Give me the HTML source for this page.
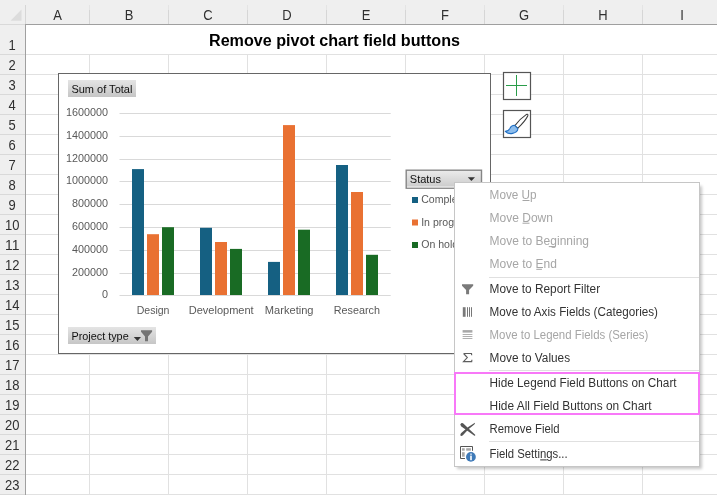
<!DOCTYPE html>
<html><head><meta charset="utf-8"><style>
html,body{margin:0;padding:0;width:717px;height:495px;overflow:hidden;background:#fff;font-family:"Liberation Sans",sans-serif;}
svg{display:block;will-change:transform;}
</style></head><body>
<svg width="717" height="495" viewBox="0 0 717 495"><rect x="0" y="0" width="717" height="495" fill="#ffffff"/>
<rect x="25" y="74" width="692" height="1" fill="#e1e1e1"/>
<rect x="25" y="94" width="692" height="1" fill="#e1e1e1"/>
<rect x="25" y="114" width="692" height="1" fill="#e1e1e1"/>
<rect x="25" y="134" width="692" height="1" fill="#e1e1e1"/>
<rect x="25" y="154" width="692" height="1" fill="#e1e1e1"/>
<rect x="25" y="174" width="692" height="1" fill="#e1e1e1"/>
<rect x="25" y="194" width="692" height="1" fill="#e1e1e1"/>
<rect x="25" y="214" width="692" height="1" fill="#e1e1e1"/>
<rect x="25" y="234" width="692" height="1" fill="#e1e1e1"/>
<rect x="25" y="254" width="692" height="1" fill="#e1e1e1"/>
<rect x="25" y="274" width="692" height="1" fill="#e1e1e1"/>
<rect x="25" y="294" width="692" height="1" fill="#e1e1e1"/>
<rect x="25" y="314" width="692" height="1" fill="#e1e1e1"/>
<rect x="25" y="334" width="692" height="1" fill="#e1e1e1"/>
<rect x="25" y="354" width="692" height="1" fill="#e1e1e1"/>
<rect x="25" y="374" width="692" height="1" fill="#e1e1e1"/>
<rect x="25" y="394" width="692" height="1" fill="#e1e1e1"/>
<rect x="25" y="414" width="692" height="1" fill="#e1e1e1"/>
<rect x="25" y="434" width="692" height="1" fill="#e1e1e1"/>
<rect x="25" y="454" width="692" height="1" fill="#e1e1e1"/>
<rect x="25" y="474" width="692" height="1" fill="#e1e1e1"/>
<rect x="25" y="494" width="692" height="1" fill="#e1e1e1"/>
<rect x="25" y="54" width="692" height="1" fill="#e1e1e1"/>
<rect x="89" y="55" width="1" height="440" fill="#e1e1e1"/>
<rect x="168" y="55" width="1" height="440" fill="#e1e1e1"/>
<rect x="247" y="55" width="1" height="440" fill="#e1e1e1"/>
<rect x="326" y="55" width="1" height="440" fill="#e1e1e1"/>
<rect x="405" y="55" width="1" height="440" fill="#e1e1e1"/>
<rect x="484" y="55" width="1" height="440" fill="#e1e1e1"/>
<rect x="563" y="55" width="1" height="440" fill="#e1e1e1"/>
<rect x="642" y="55" width="1" height="440" fill="#e1e1e1"/>
<rect x="0" y="0" width="717" height="24" fill="#efefef"/>
<rect x="0" y="0" width="25" height="495" fill="#efefef"/>
<polygon points="21.5,9.5 21.5,20.7 10.5,20.7" fill="#dcdcdc"/>
<rect x="89" y="5" width="1" height="5" fill="#e4e4e4"/><rect x="89" y="10" width="1" height="14" fill="#d6d6d6"/>
<rect x="168" y="5" width="1" height="5" fill="#e4e4e4"/><rect x="168" y="10" width="1" height="14" fill="#d6d6d6"/>
<rect x="247" y="5" width="1" height="5" fill="#e4e4e4"/><rect x="247" y="10" width="1" height="14" fill="#d6d6d6"/>
<rect x="326" y="5" width="1" height="5" fill="#e4e4e4"/><rect x="326" y="10" width="1" height="14" fill="#d6d6d6"/>
<rect x="405" y="5" width="1" height="5" fill="#e4e4e4"/><rect x="405" y="10" width="1" height="14" fill="#d6d6d6"/>
<rect x="484" y="5" width="1" height="5" fill="#e4e4e4"/><rect x="484" y="10" width="1" height="14" fill="#d6d6d6"/>
<rect x="563" y="5" width="1" height="5" fill="#e4e4e4"/><rect x="563" y="10" width="1" height="14" fill="#d6d6d6"/>
<rect x="642" y="5" width="1" height="5" fill="#e4e4e4"/><rect x="642" y="10" width="1" height="14" fill="#d6d6d6"/>
<rect x="25" y="5" width="1" height="19" fill="#d6d6d6"/>
<rect x="0" y="24" width="25" height="1" fill="#d9d9d9"/>
<rect x="25" y="24" width="692" height="1" fill="#9f9f9f"/>
<rect x="25" y="24" width="1" height="471" fill="#a0a0a0"/>
<rect x="0" y="54" width="25" height="1" fill="#d9d9d9"/>
<rect x="0" y="74" width="25" height="1" fill="#d9d9d9"/>
<rect x="0" y="94" width="25" height="1" fill="#d9d9d9"/>
<rect x="0" y="114" width="25" height="1" fill="#d9d9d9"/>
<rect x="0" y="134" width="25" height="1" fill="#d9d9d9"/>
<rect x="0" y="154" width="25" height="1" fill="#d9d9d9"/>
<rect x="0" y="174" width="25" height="1" fill="#d9d9d9"/>
<rect x="0" y="194" width="25" height="1" fill="#d9d9d9"/>
<rect x="0" y="214" width="25" height="1" fill="#d9d9d9"/>
<rect x="0" y="234" width="25" height="1" fill="#d9d9d9"/>
<rect x="0" y="254" width="25" height="1" fill="#d9d9d9"/>
<rect x="0" y="274" width="25" height="1" fill="#d9d9d9"/>
<rect x="0" y="294" width="25" height="1" fill="#d9d9d9"/>
<rect x="0" y="314" width="25" height="1" fill="#d9d9d9"/>
<rect x="0" y="334" width="25" height="1" fill="#d9d9d9"/>
<rect x="0" y="354" width="25" height="1" fill="#d9d9d9"/>
<rect x="0" y="374" width="25" height="1" fill="#d9d9d9"/>
<rect x="0" y="394" width="25" height="1" fill="#d9d9d9"/>
<rect x="0" y="414" width="25" height="1" fill="#d9d9d9"/>
<rect x="0" y="434" width="25" height="1" fill="#d9d9d9"/>
<rect x="0" y="454" width="25" height="1" fill="#d9d9d9"/>
<rect x="0" y="474" width="25" height="1" fill="#d9d9d9"/>
<rect x="0" y="494" width="25" height="1" fill="#d9d9d9"/>
<text x="57.5" y="20" font-family="Liberation Sans, sans-serif" font-size="14" fill="#303030" text-anchor="middle" textLength="8.67" lengthAdjust="spacingAndGlyphs">A</text>
<text x="129.0" y="20" font-family="Liberation Sans, sans-serif" font-size="14" fill="#303030" text-anchor="middle" textLength="8.67" lengthAdjust="spacingAndGlyphs">B</text>
<text x="208.0" y="20" font-family="Liberation Sans, sans-serif" font-size="14" fill="#303030" text-anchor="middle" textLength="9.39" lengthAdjust="spacingAndGlyphs">C</text>
<text x="287.0" y="20" font-family="Liberation Sans, sans-serif" font-size="14" fill="#303030" text-anchor="middle" textLength="9.39" lengthAdjust="spacingAndGlyphs">D</text>
<text x="366.0" y="20" font-family="Liberation Sans, sans-serif" font-size="14" fill="#303030" text-anchor="middle" textLength="8.67" lengthAdjust="spacingAndGlyphs">E</text>
<text x="445.0" y="20" font-family="Liberation Sans, sans-serif" font-size="14" fill="#303030" text-anchor="middle" textLength="7.94" lengthAdjust="spacingAndGlyphs">F</text>
<text x="524.0" y="20" font-family="Liberation Sans, sans-serif" font-size="14" fill="#303030" text-anchor="middle" textLength="10.11" lengthAdjust="spacingAndGlyphs">G</text>
<text x="603.0" y="20" font-family="Liberation Sans, sans-serif" font-size="14" fill="#303030" text-anchor="middle" textLength="9.39" lengthAdjust="spacingAndGlyphs">H</text>
<text x="682.0" y="20" font-family="Liberation Sans, sans-serif" font-size="14" fill="#303030" text-anchor="middle" textLength="3.61" lengthAdjust="spacingAndGlyphs">I</text>
<text x="12.2" y="50" font-family="Liberation Sans, sans-serif" font-size="13.8" fill="#303030" text-anchor="middle" textLength="7.23" lengthAdjust="spacingAndGlyphs">1</text>
<text x="12.2" y="70" font-family="Liberation Sans, sans-serif" font-size="13.8" fill="#303030" text-anchor="middle" textLength="7.23" lengthAdjust="spacingAndGlyphs">2</text>
<text x="12.2" y="90" font-family="Liberation Sans, sans-serif" font-size="13.8" fill="#303030" text-anchor="middle" textLength="7.23" lengthAdjust="spacingAndGlyphs">3</text>
<text x="12.2" y="110" font-family="Liberation Sans, sans-serif" font-size="13.8" fill="#303030" text-anchor="middle" textLength="7.23" lengthAdjust="spacingAndGlyphs">4</text>
<text x="12.2" y="130" font-family="Liberation Sans, sans-serif" font-size="13.8" fill="#303030" text-anchor="middle" textLength="7.23" lengthAdjust="spacingAndGlyphs">5</text>
<text x="12.2" y="150" font-family="Liberation Sans, sans-serif" font-size="13.8" fill="#303030" text-anchor="middle" textLength="7.23" lengthAdjust="spacingAndGlyphs">6</text>
<text x="12.2" y="170" font-family="Liberation Sans, sans-serif" font-size="13.8" fill="#303030" text-anchor="middle" textLength="7.23" lengthAdjust="spacingAndGlyphs">7</text>
<text x="12.2" y="190" font-family="Liberation Sans, sans-serif" font-size="13.8" fill="#303030" text-anchor="middle" textLength="7.23" lengthAdjust="spacingAndGlyphs">8</text>
<text x="12.2" y="210" font-family="Liberation Sans, sans-serif" font-size="13.8" fill="#303030" text-anchor="middle" textLength="7.23" lengthAdjust="spacingAndGlyphs">9</text>
<text x="12.2" y="230" font-family="Liberation Sans, sans-serif" font-size="13.8" fill="#303030" text-anchor="middle" textLength="14.46" lengthAdjust="spacingAndGlyphs">10</text>
<text x="12.2" y="250" font-family="Liberation Sans, sans-serif" font-size="13.8" fill="#303030" text-anchor="middle" textLength="14.46" lengthAdjust="spacingAndGlyphs">11</text>
<text x="12.2" y="270" font-family="Liberation Sans, sans-serif" font-size="13.8" fill="#303030" text-anchor="middle" textLength="14.46" lengthAdjust="spacingAndGlyphs">12</text>
<text x="12.2" y="290" font-family="Liberation Sans, sans-serif" font-size="13.8" fill="#303030" text-anchor="middle" textLength="14.46" lengthAdjust="spacingAndGlyphs">13</text>
<text x="12.2" y="310" font-family="Liberation Sans, sans-serif" font-size="13.8" fill="#303030" text-anchor="middle" textLength="14.46" lengthAdjust="spacingAndGlyphs">14</text>
<text x="12.2" y="330" font-family="Liberation Sans, sans-serif" font-size="13.8" fill="#303030" text-anchor="middle" textLength="14.46" lengthAdjust="spacingAndGlyphs">15</text>
<text x="12.2" y="350" font-family="Liberation Sans, sans-serif" font-size="13.8" fill="#303030" text-anchor="middle" textLength="14.46" lengthAdjust="spacingAndGlyphs">16</text>
<text x="12.2" y="370" font-family="Liberation Sans, sans-serif" font-size="13.8" fill="#303030" text-anchor="middle" textLength="14.46" lengthAdjust="spacingAndGlyphs">17</text>
<text x="12.2" y="390" font-family="Liberation Sans, sans-serif" font-size="13.8" fill="#303030" text-anchor="middle" textLength="14.46" lengthAdjust="spacingAndGlyphs">18</text>
<text x="12.2" y="410" font-family="Liberation Sans, sans-serif" font-size="13.8" fill="#303030" text-anchor="middle" textLength="14.46" lengthAdjust="spacingAndGlyphs">19</text>
<text x="12.2" y="430" font-family="Liberation Sans, sans-serif" font-size="13.8" fill="#303030" text-anchor="middle" textLength="14.46" lengthAdjust="spacingAndGlyphs">20</text>
<text x="12.2" y="450" font-family="Liberation Sans, sans-serif" font-size="13.8" fill="#303030" text-anchor="middle" textLength="14.46" lengthAdjust="spacingAndGlyphs">21</text>
<text x="12.2" y="470" font-family="Liberation Sans, sans-serif" font-size="13.8" fill="#303030" text-anchor="middle" textLength="14.46" lengthAdjust="spacingAndGlyphs">22</text>
<text x="12.2" y="490" font-family="Liberation Sans, sans-serif" font-size="13.8" fill="#303030" text-anchor="middle" textLength="14.46" lengthAdjust="spacingAndGlyphs">23</text>
<text x="209" y="45.6" font-family="Liberation Sans, sans-serif" font-size="15.8" font-weight="bold" fill="#000" textLength="251" lengthAdjust="spacingAndGlyphs">Remove pivot chart field buttons</text>
<defs><linearGradient id="btn" x1="0" y1="0" x2="0" y2="1"><stop offset="0" stop-color="#e4e4e4"/><stop offset="1" stop-color="#c6c6c6"/></linearGradient><linearGradient id="btn2" x1="0" y1="0" x2="0" y2="1"><stop offset="0" stop-color="#ececec"/><stop offset="1" stop-color="#c9c9c9"/></linearGradient></defs>
<rect x="58.5" y="73.5" width="432" height="280" fill="#ffffff" stroke="#666666" stroke-width="1"/>
<rect x="68" y="80" width="68" height="17" fill="url(#btn)"/>
<text x="71.4" y="92.6" font-family="Liberation Sans, sans-serif" font-size="11" fill="#111" textLength="61" lengthAdjust="spacingAndGlyphs">Sum of Total</text>
<rect x="119.5" y="295" width="271.2" height="1" fill="#d9d9d9"/>
<text x="108" y="298.40" font-family="Liberation Sans, sans-serif" font-size="10.8" fill="#595959" text-anchor="end">0</text>
<rect x="119.5" y="273" width="271.2" height="1" fill="#d9d9d9"/>
<text x="108" y="276.40" font-family="Liberation Sans, sans-serif" font-size="10.8" fill="#595959" text-anchor="end">200000</text>
<rect x="119.5" y="250" width="271.2" height="1" fill="#d9d9d9"/>
<text x="108" y="253.40" font-family="Liberation Sans, sans-serif" font-size="10.8" fill="#595959" text-anchor="end">400000</text>
<rect x="119.5" y="227" width="271.2" height="1" fill="#d9d9d9"/>
<text x="108" y="230.40" font-family="Liberation Sans, sans-serif" font-size="10.8" fill="#595959" text-anchor="end">600000</text>
<rect x="119.5" y="204" width="271.2" height="1" fill="#d9d9d9"/>
<text x="108" y="207.40" font-family="Liberation Sans, sans-serif" font-size="10.8" fill="#595959" text-anchor="end">800000</text>
<rect x="119.5" y="181" width="271.2" height="1" fill="#d9d9d9"/>
<text x="108" y="184.40" font-family="Liberation Sans, sans-serif" font-size="10.8" fill="#595959" text-anchor="end">1000000</text>
<rect x="119.5" y="159" width="271.2" height="1" fill="#d9d9d9"/>
<text x="108" y="162.40" font-family="Liberation Sans, sans-serif" font-size="10.8" fill="#595959" text-anchor="end">1200000</text>
<rect x="119.5" y="136" width="271.2" height="1" fill="#d9d9d9"/>
<text x="108" y="139.40" font-family="Liberation Sans, sans-serif" font-size="10.8" fill="#595959" text-anchor="end">1400000</text>
<rect x="119.5" y="113" width="271.2" height="1" fill="#d9d9d9"/>
<text x="108" y="116.40" font-family="Liberation Sans, sans-serif" font-size="10.8" fill="#595959" text-anchor="end">1600000</text>
<rect x="132" y="169.1" width="12" height="125.90" fill="#156082"/>
<rect x="147" y="234.2" width="12" height="60.80" fill="#e97132"/>
<rect x="162" y="227.2" width="12" height="67.80" fill="#196b24"/>
<rect x="200" y="227.8" width="12" height="67.20" fill="#156082"/>
<rect x="215" y="242" width="12" height="53.00" fill="#e97132"/>
<rect x="230" y="248.9" width="12" height="46.10" fill="#196b24"/>
<rect x="268" y="261.9" width="12" height="33.10" fill="#156082"/>
<rect x="283" y="125.1" width="12" height="169.90" fill="#e97132"/>
<rect x="298" y="229.7" width="12" height="65.30" fill="#196b24"/>
<rect x="336" y="165" width="12" height="130.00" fill="#156082"/>
<rect x="351" y="192" width="12" height="103.00" fill="#e97132"/>
<rect x="366" y="254.8" width="12" height="40.20" fill="#196b24"/>
<text x="153.1" y="313.8" font-family="Liberation Sans, sans-serif" font-size="11" fill="#595959" text-anchor="middle" textLength="32.8" lengthAdjust="spacingAndGlyphs">Design</text>
<text x="221.2" y="313.8" font-family="Liberation Sans, sans-serif" font-size="11" fill="#595959" text-anchor="middle" textLength="65" lengthAdjust="spacingAndGlyphs">Development</text>
<text x="289.2" y="313.8" font-family="Liberation Sans, sans-serif" font-size="11" fill="#595959" text-anchor="middle" textLength="48.7" lengthAdjust="spacingAndGlyphs">Marketing</text>
<text x="356.8" y="313.8" font-family="Liberation Sans, sans-serif" font-size="11" fill="#595959" text-anchor="middle" textLength="46.2" lengthAdjust="spacingAndGlyphs">Research</text>
<rect x="406.2" y="170.2" width="75.3" height="18" fill="url(#btn2)" stroke="#858585" stroke-width="1.4"/><rect x="407" y="186.5" width="74" height="1" fill="#f4f4f4"/>
<text x="409.8" y="182.6" font-family="Liberation Sans, sans-serif" font-size="11" fill="#111">Status</text>
<polygon points="467.8,177.2 475,177.2 471.4,181" fill="#333"/>
<rect x="412" y="197" width="6" height="6" fill="#156082"/>
<text x="421.2" y="203.2" font-family="Liberation Sans, sans-serif" font-size="11.2" fill="#595959" textLength="45.22" lengthAdjust="spacingAndGlyphs">Complete</text>
<rect x="412" y="219.5" width="6" height="6" fill="#e97132"/>
<text x="421.2" y="225.5" font-family="Liberation Sans, sans-serif" font-size="11.2" fill="#595959" textLength="52.80" lengthAdjust="spacingAndGlyphs">In progress</text>
<rect x="412" y="242" width="6" height="6" fill="#196b24"/>
<text x="421.2" y="248" font-family="Liberation Sans, sans-serif" font-size="11.2" fill="#595959" textLength="36.96" lengthAdjust="spacingAndGlyphs">On hold</text>
<rect x="68" y="327" width="88" height="17" fill="url(#btn)"/>
<text x="71.4" y="340.2" font-family="Liberation Sans, sans-serif" font-size="11" fill="#111" textLength="57.3" lengthAdjust="spacingAndGlyphs">Project type</text>
<polygon points="133.8,337 141,337 137.4,341" fill="#333"/>
<path d="M141,330.2 L152.1,330.2 L152.1,331.8 L148,336.4 L148,341.3 L145,341.3 L145,336.4 L141,331.8 Z" fill="#747474"/>
<rect x="503.5" y="72.5" width="27" height="27" fill="#fff" stroke="#555" stroke-width="1.2"/>
<rect x="506" y="85" width="21" height="1" fill="#2a9d4a"/>
<rect x="516" y="75" width="1" height="21" fill="#2a9d4a"/>
<rect x="503.5" y="110.5" width="27" height="27" fill="#fff" stroke="#555" stroke-width="1.2"/>
<path d="M514.9,125.6 C518,121.5 522.5,117 526.2,114.6 C527.6,113.8 528.3,114.6 527.7,116 C525.9,119.8 521.6,124.6 517.6,128.3 Z" fill="#fff" stroke="#3c3c3c" stroke-width="1.1" stroke-linejoin="round"/>
<path d="M514.6,125.3 C512.2,125.4 510.6,126.6 509.9,128.4 C509.1,130.3 507.6,131.2 505.3,131.4 C506.8,133 509.6,134 512.6,133.4 C515.6,132.8 517.8,130.8 517.9,128.6 Z" fill="#8dbdec" stroke="#1f6fc4" stroke-width="1.1" stroke-linejoin="round"/>
<filter id="sh" x="-10%" y="-10%" width="120%" height="120%"><feGaussianBlur stdDeviation="1.6"/></filter>
<rect x="457" y="186" width="245" height="283" fill="#000" opacity="0.22" filter="url(#sh)"/>
<rect x="454.5" y="182.5" width="245" height="284" fill="#fff" stroke="#c6c6c6" stroke-width="1"/>
<text x="489.6" y="199" font-family="Liberation Sans, sans-serif" font-size="12" fill="#a6a6a6" textLength="47" lengthAdjust="spacingAndGlyphs">Move Up</text>
<text x="489.6" y="222" font-family="Liberation Sans, sans-serif" font-size="12" fill="#a6a6a6">Move Down</text>
<text x="489.6" y="245" font-family="Liberation Sans, sans-serif" font-size="12" fill="#a6a6a6">Move to Beginning</text>
<text x="489.6" y="268" font-family="Liberation Sans, sans-serif" font-size="12" fill="#a6a6a6">Move to End</text>
<text x="489.6" y="293" font-family="Liberation Sans, sans-serif" font-size="12" fill="#333333" textLength="110.5" lengthAdjust="spacingAndGlyphs">Move to Report Filter</text>
<text x="489.6" y="316" font-family="Liberation Sans, sans-serif" font-size="12" fill="#333333" textLength="168.4" lengthAdjust="spacingAndGlyphs">Move to Axis Fields (Categories)</text>
<text x="489.6" y="339" font-family="Liberation Sans, sans-serif" font-size="12" fill="#a6a6a6" textLength="158.8" lengthAdjust="spacingAndGlyphs">Move to Legend Fields (Series)</text>
<text x="489.6" y="362" font-family="Liberation Sans, sans-serif" font-size="12" fill="#333333" textLength="80.5" lengthAdjust="spacingAndGlyphs">Move to Values</text>
<text x="489.6" y="387" font-family="Liberation Sans, sans-serif" font-size="12" fill="#333333" textLength="187" lengthAdjust="spacingAndGlyphs">Hide Legend Field Buttons on Chart</text>
<text x="489.6" y="410" font-family="Liberation Sans, sans-serif" font-size="12" fill="#333333" textLength="162" lengthAdjust="spacingAndGlyphs">Hide All Field Buttons on Chart</text>
<text x="489.6" y="433" font-family="Liberation Sans, sans-serif" font-size="12" fill="#333333" textLength="70" lengthAdjust="spacingAndGlyphs">Remove Field</text>
<text x="489.6" y="457.5" font-family="Liberation Sans, sans-serif" font-size="12" fill="#333333" textLength="78" lengthAdjust="spacingAndGlyphs">Field Settings...</text>
<rect x="522.5" y="200.0" width="7.0" height="1" fill="#a6a6a6"/>
<rect x="522.5" y="222.7" width="7.0" height="1" fill="#a6a6a6"/>
<rect x="548.8" y="246.1" width="6.400000000000091" height="1" fill="#a6a6a6"/>
<rect x="536.3" y="268.8" width="5.600000000000023" height="1" fill="#a6a6a6"/>
<rect x="540.2" y="459.4" width="6.599999999999909" height="1" fill="#333333"/>
<rect x="489" y="277" width="210" height="1" fill="#e0e0e0"/>
<rect x="489" y="370" width="210" height="1" fill="#e0e0e0"/>
<rect x="489" y="441" width="210" height="1" fill="#e0e0e0"/>
<rect x="455" y="373" width="244" height="41" fill="none" stroke="#f878f8" stroke-width="2"/>
<path d="M462,284.2 L473.2,284.2 L473.2,285.8 L469.1,290 L469.1,294.2 L466.1,294.2 L466.1,290 L462,285.8 Z" fill="#7a7a7a"/>
<rect x="462.8" y="307.2" width="2.8" height="9.6" fill="#7a7a7a"/><rect x="467" y="307.2" width="1" height="9.6" fill="#777"/><rect x="469" y="307.2" width="1" height="9.6" fill="#777"/><rect x="471" y="307.2" width="1" height="9.6" fill="#777"/>
<rect x="462.6" y="330.1" width="9.8" height="2.5" fill="#a8a8a8"/><rect x="462.6" y="334" width="9.8" height="1" fill="#b0b0b0"/><rect x="462.6" y="336" width="9.8" height="1" fill="#b0b0b0"/><rect x="462.6" y="338" width="9.8" height="1" fill="#b0b0b0"/>
<path d="M463.6,353.5 L471.5,353.5 L471.7,355.2 M463.6,353.5 L467.3,357.6 L463.5,361.6 L471.7,361.6 L471.9,359.8" fill="none" stroke="#5e5e5e" stroke-width="1.15" stroke-linejoin="miter"/>
<path d="M460.4,424.4 Q461.2,422.4 463,423.2 L475.2,434.8 Q475.5,436 474.4,435.8 L461,426.2 Z" fill="#555"/>
<path d="M474.9,422.8 Q475.3,423.6 474.3,424.4 Q467.8,428.9 462.9,435.2 Q461.2,436.6 460.3,435.2 Q460.4,433.9 461.2,433 Q467.5,426.8 474.9,422.8 Z" fill="#555"/>
<path d="M465,458.5 L460.5,458.5 L460.5,446.5 L472.5,446.5 L472.5,450.8" fill="none" stroke="#555" stroke-width="1"/>
<rect x="462" y="448.2" width="2.7" height="2.5" fill="#a8a8a8"/><rect x="466.2" y="448.2" width="4.7" height="2.5" fill="#a8a8a8"/><rect x="462" y="452.2" width="2.7" height="4.5" fill="#a8a8a8"/>
<circle cx="470.9" cy="456.9" r="4.9" fill="#3f7ab8"/><rect x="470.2" y="455.6" width="1.6" height="4.6" fill="#fff"/><rect x="470.2" y="453.6" width="1.6" height="1.1" fill="#fff"/></svg>
</body></html>
